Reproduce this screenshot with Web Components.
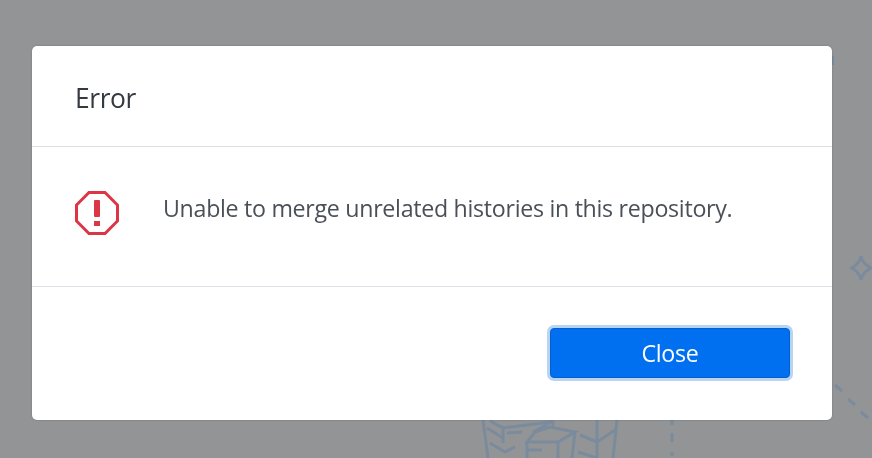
<!DOCTYPE html>
<html>
<head>
<meta charset="utf-8">
<style>
    html, body { margin: 0; height: 100%; overflow: hidden; }
    body { font-family: "Open Sans", "Liberation Sans", sans-serif; }
</style>
</head>
<body>
<error-page>
    <modal-dialog title-text="Error">
        <alert-message>Unable to merge unrelated histories in this repository.</alert-message>
        <action-button slot="footer">Close</action-button>
    </modal-dialog>
</error-page>

<script>
// page behind the dialog, dimmed, with a bit of the sketch showing
class ErrorPage extends HTMLElement {
    constructor() {
        super();
        this.attachShadow({ mode: 'open' });
    }

    connectedCallback() {
        this.shadowRoot.innerHTML = `
            <style>
                :host {
                    display: flex;
                    align-items: flex-start;
                    position: relative;
                    width: 872px;
                    height: 458px;
                    padding: 46px 0 0 32px;
                    box-sizing: border-box;
                    background: #939495;
                    overflow: hidden;
                    filter: blur(.6px);
                }
                svg {
                    position: absolute;
                    left: 0;
                    top: 0;
                }
                ::slotted(*) {
                    position: relative;
                }
            </style>
            <svg width="872" height="458" viewBox="0 0 872 458" fill="none" stroke="#7b8b9e" stroke-width="3">
                <path d="M833 56v9" stroke-width="2"/>
                <path d="M861 256q1 7 10 12q-9 5-10 12q-1-7-9-12q8-5 9-12z"/>
                <path d="M835 385l7 6M848 399l7 6M861 412l7 6"/>
                <path d="M672 420v5M672 433v9M672 452v4"/>
                <path d="M483 420l5 38M490 421l13 7v15M487 428l16 10M490 443l15 9l10-5M507 433l15-1M503 428l47-6"/>
                <path d="M527 442l8-10l15-5l25 5l-17 10zM533 432l20-11M553 421v6M527 442v16M558 442v16M575 432l-3 26M527 450h15"/>
                <path d="M597 420v38M617 420l-4 38M580 435l17 7l18-12M578 452l19 6"/>
            </svg>
            <slot></slot>
        `;
    }
}

class ModalDialog extends HTMLElement {
    constructor() {
        super();
        this.attachShadow({ mode: 'open' });
    }

    connectedCallback() {
        const title = this.getAttribute('title-text') || '';
        this.shadowRoot.innerHTML = `
            <style>
                :host {
                    display: flex;
                    flex-direction: column;
                    width: 800px;
                    height: 374px;
                    background: #fff;
                    border-radius: 5px;
                    box-shadow: 0 0 2px rgba(0, 0, 0, .25);
                }
                header {
                    height: 101px;
                    box-sizing: border-box;
                    padding: 4px 43px 0;
                    display: flex;
                    align-items: center;
                    border-bottom: 1px solid #dcdfe6;
                    color: #343a40;
                    font-size: 26.4px;
                    font-weight: 500;
                    letter-spacing: -.4px;
                }
                main {
                    height: 140px;
                    box-sizing: border-box;
                    border-bottom: 1px solid #dcdfe6;
                }
                footer {
                    flex: 1;
                    display: flex;
                    justify-content: flex-end;
                    padding: 41px 42px 0 0;
                }
            </style>
            <header>${title}</header>
            <main><slot></slot></main>
            <footer><slot name="footer"></slot></footer>
        `;
    }
}

class AlertMessage extends HTMLElement {
    constructor() {
        super();
        this.attachShadow({ mode: 'open' });
    }

    connectedCallback() {
        this.shadowRoot.innerHTML = `
            <style>
                :host {
                    display: flex;
                    align-items: flex-start;
                    gap: 43px;
                    padding: 43px 0 0 42px;
                    color: #495057;
                    font-size: 23.2px;
                    letter-spacing: -.29px;
                    line-height: 32px;
                }
                svg { flex: none; }
                span { margin-top: 2px; }
            </style>
            <svg width="46" height="46" viewBox="0 0 46 46">
                <path d="M15 2.5h16L43.5 15v16L31 43.5H15L2.5 31V15z" fill="none" stroke="#dc3545" stroke-width="3" stroke-linejoin="miter"/>
                <rect x="20" y="10" width="6" height="17" rx="1" fill="#dc3545"/>
                <rect x="20" y="31" width="6" height="5" fill="#dc3545"/>
            </svg>
            <span><slot></slot></span>
        `;
    }
}

class ActionButton extends HTMLElement {
    constructor() {
        super();
        this.attachShadow({ mode: 'open' });
    }

    connectedCallback() {
        this.shadowRoot.innerHTML = `
            <style>
                :host {
                    display: block;
                }
                button {
                    display: block;
                    width: 240px;
                    height: 50px;
                    box-sizing: border-box;
                    background: #0070f0;
                    color: #fff;
                    border: 1px solid #0062cc;
                    border-radius: 4px;
                    box-shadow: 0 0 0 3px #b8d4f5;
                    font: 23.2px "Open Sans", "Liberation Sans", sans-serif;
                    letter-spacing: -.25px;
                    padding: 0;
                }
            </style>
            <button><slot></slot></button>
        `;
    }
}

window.customElements.define('error-page', ErrorPage);
window.customElements.define('modal-dialog', ModalDialog);
window.customElements.define('alert-message', AlertMessage);
window.customElements.define('action-button', ActionButton);
</script>
</body>
</html>
